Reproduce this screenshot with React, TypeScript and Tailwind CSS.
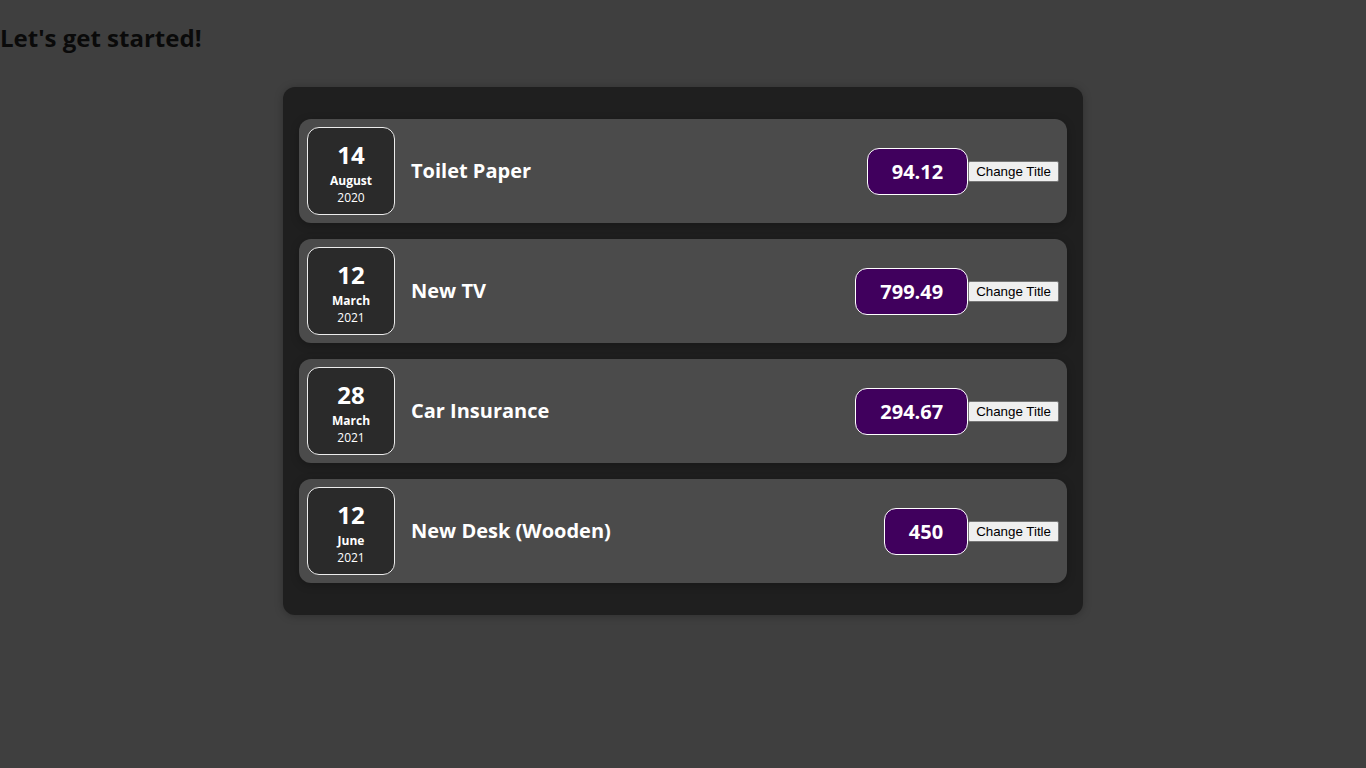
type Expense = {
  id: string;
  title: string;
  amount: number;
  date: Date;
};

const expenses: Expense[] = [
  { id: "e1", title: "Toilet Paper", amount: 94.12, date: new Date(2020, 7, 14) },
  { id: "e2", title: "New TV", amount: 799.49, date: new Date(2021, 2, 12) },
  { id: "e3", title: "Car Insurance", amount: 294.67, date: new Date(2021, 2, 28) },
  { id: "e4", title: "New Desk (Wooden)", amount: 450, date: new Date(2021, 5, 12) },
];

function ExpenseDate({ date }: { date: Date }) {
  const month = date.toLocaleString("en-US", { month: "long" });
  const day = date.toLocaleString("en-US", { day: "2-digit" });
  const year = date.getFullYear();

  return (
    <div className="flex h-[88px] w-[88px] shrink-0 flex-col items-center justify-center rounded-xl border border-[#ececec] bg-[#2a2a2a] pt-[2px] text-white">
      <div className="text-2xl font-bold leading-[30px]">{day}</div>
      <div className="mt-[3px] text-xs font-bold leading-[15px]">{month}</div>
      <div className="mt-[2px] text-xs font-medium leading-[15px]">{year}</div>
    </div>
  );
}

function ExpenseItem({ expense }: { expense: Expense }) {
  return (
    <div className="flex items-center rounded-xl bg-[#4b4b4b] p-2 shadow-[0_2px_8px_rgba(0,0,0,0.25)]">
      <ExpenseDate date={expense.date} />
      <div className="flex flex-1 items-center">
        <h2 className="mx-4 flex-1 text-xl font-bold leading-[28px] text-white">
          {expense.title}
        </h2>
        <div className="rounded-xl border border-white bg-[#40005d] px-6 py-2 text-xl font-bold leading-[29px] text-white">
          {expense.amount}
        </div>
      </div>
      <button
        type="button"
        className="h-[21px] rounded-[2px] border border-[#767676] bg-[#efefef] px-[7px] text-[13.333px] leading-[17px] text-black [font-family:'Liberation_Sans',Arial,sans-serif]"
      >
        Change Title
      </button>
    </div>
  );
}

export default function App() {
  return (
    <div className="min-h-screen bg-[#3f3f3f] pt-5 [font-family:'Open_Sans',sans-serif]">
      <h2 className="text-2xl font-bold leading-[35px] text-[#0a0a0a]">
        Let's get started!
      </h2>
      <div className="mx-auto mt-8 flex w-[800px] max-w-[95%] flex-col gap-4 rounded-xl bg-[#1f1f1f] px-4 py-8 shadow-[0_1px_8px_rgba(0,0,0,0.25)]">
        {expenses.map((expense) => (
          <ExpenseItem key={expense.id} expense={expense} />
        ))}
      </div>
    </div>
  );
}
